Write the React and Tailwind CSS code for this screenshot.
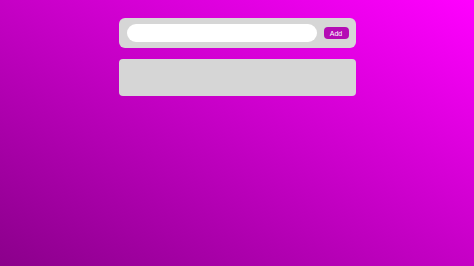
export default function App() {
  return (
    <div
      className="w-full h-[266px] bg-[linear-gradient(to_top_right,#8b008b,#ff00ff)] pt-[18px]"
      style={{ fontFamily: '"Liberation Sans", Arial, sans-serif' }}
    >
      <div className="w-[237px] mx-auto flex flex-col gap-[11px]">
        <div className="h-[30px] bg-[#d6d6d6] rounded-[6px] flex items-center pl-[8px] pr-[7px] gap-[7px]">
          <input
            type="text"
            className="w-[190px] h-[18px] rounded-full bg-white outline-none border-0"
          />
          <button className="w-[25px] h-[12px] rounded-[4px] bg-[#b40cb4] text-white text-[7px] leading-none flex items-center justify-center">
            Add
          </button>
        </div>
        <div className="h-[37px] bg-[#d6d6d6] rounded-[4px]"></div>
      </div>
    </div>
  );
}
